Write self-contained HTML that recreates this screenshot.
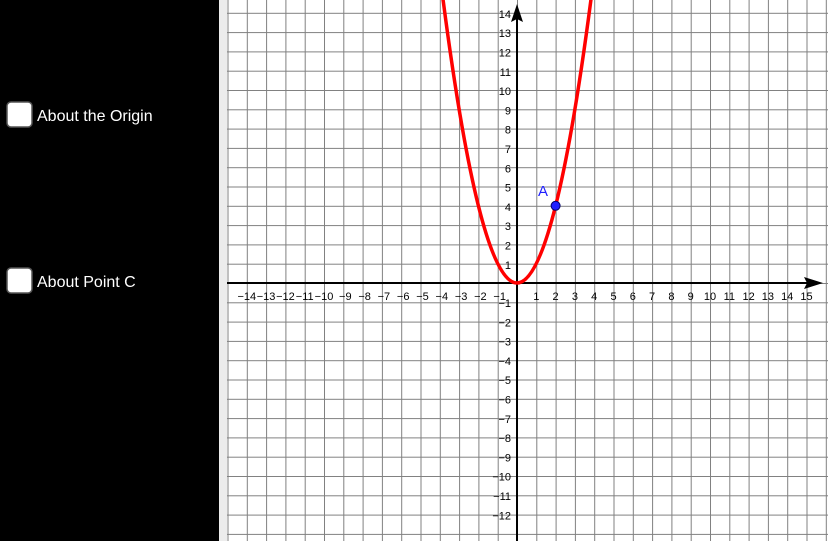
<!DOCTYPE html>
<html><head><meta charset="utf-8"><style>
html,body{margin:0;padding:0;width:828px;height:541px;overflow:hidden;background:#fff}
svg{display:block}
</style></head><body>
<svg width="828" height="541" xmlns="http://www.w3.org/2000/svg" font-family="Liberation Sans, sans-serif">
<defs>
<pattern id="g" x="517" y="283" width="19.3" height="19.3" patternUnits="userSpaceOnUse">
<path d="M0.5 0V19.3M0 0.5H19.3" stroke="#808080" stroke-width="1" fill="none"/>
</pattern>
</defs>
<rect x="0" y="0" width="219" height="541" fill="#000"/>
<rect x="219" y="0" width="8" height="541" fill="#ececec"/>
<rect x="227" y="0" width="601" height="541" fill="#fff"/>
<rect x="227" y="0" width="601" height="541" fill="url(#g)"/>
<!-- checkboxes -->
<rect x="7" y="102" width="25" height="25" rx="4" fill="#fff" stroke="#555" stroke-width="1.5"/>
<text x="37" y="121" font-size="16" fill="#fff">About the Origin</text>
<rect x="7" y="268" width="25" height="25" rx="4" fill="#fff" stroke="#555" stroke-width="1.5"/>
<text x="37" y="287" font-size="16" fill="#fff">About Point C</text>
<!-- axes -->
<line x1="227" y1="283" x2="810" y2="283" stroke="#000" stroke-width="2"/>
<path d="M823 283 L804 277 L807 283 L804 289 Z" fill="#000"/>
<line x1="517" y1="541" x2="517" y2="18" stroke="#000" stroke-width="2"/>
<path d="M517 4 L511 22 L517 19 L523 22 Z" fill="#000"/>
<g font-size="11" fill="#000" text-anchor="middle">
<text x="246.8" y="300">−14</text><text x="266.1" y="300">−13</text><text x="285.4" y="300">−12</text><text x="304.7" y="300">−11</text><text x="324" y="300">−10</text><text x="345.3" y="300">−9</text><text x="364.6" y="300">−8</text><text x="383.9" y="300">−7</text><text x="403.2" y="300">−6</text><text x="422.5" y="300">−5</text><text x="441.8" y="300">−4</text><text x="461.1" y="300">−3</text><text x="480.4" y="300">−2</text><text x="499.7" y="300">−1</text>
<text x="536.3" y="300">1</text><text x="555.6" y="300">2</text><text x="574.9" y="300">3</text><text x="594.2" y="300">4</text><text x="613.5" y="300">5</text><text x="632.8" y="300">6</text><text x="652.1" y="300">7</text><text x="671.4" y="300">8</text><text x="690.7" y="300">9</text><text x="710" y="300">10</text><text x="729.3" y="300">11</text><text x="748.6" y="300">12</text><text x="767.9" y="300">13</text><text x="787.2" y="300">14</text><text x="806.5" y="300">15</text>
</g>
<g font-size="11" fill="#000" text-anchor="end">
<text x="511" y="18">14</text><text x="511" y="37">13</text><text x="511" y="56.5">12</text><text x="511" y="75.8">11</text><text x="511" y="95">10</text><text x="511" y="114.4">9</text><text x="511" y="133.7">8</text><text x="511" y="153">7</text><text x="511" y="172.3">6</text><text x="511" y="191.6">5</text><text x="511" y="210.9">4</text><text x="511" y="230.2">3</text><text x="511" y="249.5">2</text><text x="511" y="268.8">1</text>
<text x="511" y="307">−1</text><text x="511" y="326.3">−2</text><text x="511" y="345.6">−3</text><text x="511" y="364.9">−4</text><text x="511" y="384.2">−5</text><text x="511" y="403.5">−6</text><text x="511" y="422.8">−7</text><text x="511" y="442.1">−8</text><text x="511" y="461.4">−9</text><text x="511" y="480.7">−10</text><text x="511" y="500">−11</text><text x="511" y="519.3">−12</text>
</g>
<!-- parabola -->
<path d="M439.8 -25.8 Q517 591.8 594.2 -25.8" fill="none" stroke="#ff0000" stroke-width="3.5"/>
<circle cx="555.6" cy="205.8" r="4.5" fill="#1f1fff" stroke="#000066" stroke-width="1"/>
<text x="538" y="196" font-size="15" fill="#1f1fff">A</text>
</svg>
</body></html>
